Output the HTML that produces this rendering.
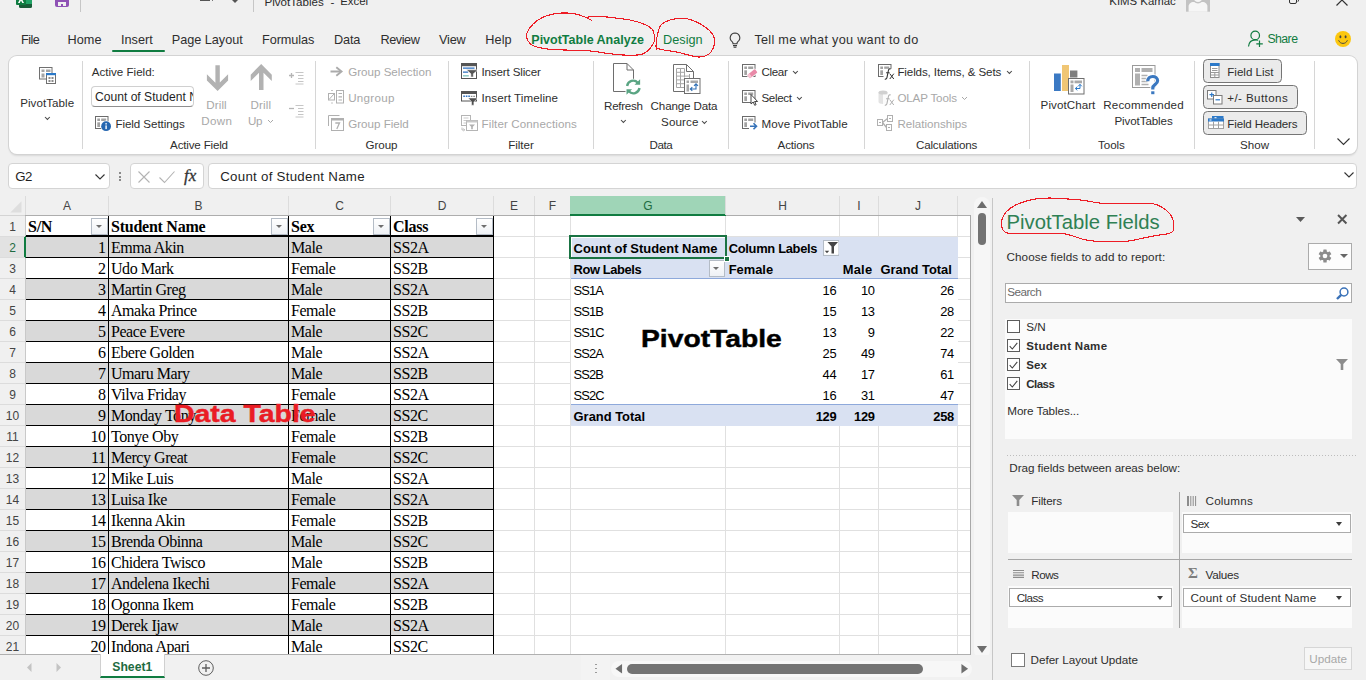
<!DOCTYPE html>
<html><head><meta charset="utf-8"><title>PivotTables - Excel</title>
<style>
*{box-sizing:border-box;margin:0;padding:0}
html,body{width:1366px;height:680px;overflow:hidden;background:#f0f0f0;font-family:"Liberation Sans",sans-serif}
body{font-family:"Liberation Sans",sans-serif;font-size:12.6px;color:#2e2e2e;position:relative}
.a{position:absolute}
.t{position:absolute;white-space:nowrap;line-height:1}
.c{transform:translateX(-50%)}
.dis{color:#a6a6a6}
.sep{position:absolute;width:1px;background:#d6d6d6;top:61px;height:88px}
svg{position:absolute;overflow:visible}
/* tabs */
.tab{position:absolute;top:32.5px;font-size:12.7px;white-space:nowrap;line-height:1;color:#242424}
/* ribbon */
#ribbon{position:absolute;left:9px;top:56px;width:1348px;height:98px;background:#fff;border-radius:8px;box-shadow:0 0 0 1px #d3d3d3,0 1.500px 2px rgba(0,0,0,.10)}
.rt{position:absolute;white-space:nowrap;line-height:1;font-size:12.3px}
.gl{position:absolute;white-space:nowrap;line-height:1;font-size:12px;top:139px;transform:translateX(-50%);color:#242424}
.sbtn{position:absolute;border:1px solid #757575;border-radius:4.500px;background:#ebebeb}
/* formula bar */
.fbox{position:absolute;top:163px;height:26px;background:#fff;border:1px solid #d4d4d4;border-radius:4px}
/* sheet */
#sheet{position:absolute;left:0;top:196px;width:970px;height:461px;background:#fff;overflow:hidden}
.ch{position:absolute;top:0;height:19px;background:#f0f0f0;font-size:12.5px;color:#444;text-align:center;line-height:20px}
.rh{position:absolute;left:0;width:24px;height:21px;background:#f0f0f0;font-size:12.5px;color:#444;text-align:right;padding-right:4px;line-height:22px}
.vl{position:absolute;width:1px;background:#e1e1e1}
.hl{position:absolute;height:1px;background:#e1e1e1}
.dc{position:absolute;height:21px;font-family:"Liberation Serif",serif;font-size:16px;line-height:21px;color:#000;white-space:nowrap;padding:0 2px;letter-spacing:-.45px}
.pv{position:absolute;height:21px;font-size:13px;line-height:23.500px;color:#000;white-space:nowrap;letter-spacing:0}
.fb{position:absolute;width:16.500px;height:16.500px;background:linear-gradient(#fff,#eef1f5);border:1px solid #b4bcc6}
.fb:after{content:"";position:absolute;left:3.800px;top:5.800px;border:3.700px solid transparent;border-top:3.800px solid #6e6e6e;border-bottom:0}
/* pane */
#pane{position:absolute;left:992px;top:198px;width:374px;height:482px;background:#f0f0f0;border-left:1px solid #c6c6c6}
.pt{position:absolute;white-space:nowrap;line-height:1;font-size:12.3px;color:#262626}
.wb{position:absolute;background:#fbfbfb}
.cb{position:absolute;width:12px;height:12px;background:#fff;border:1px solid #5c5c5c}
.dd{position:absolute;height:19px;background:#fff;border:1px solid #ababab;font-size:12px;line-height:17px;padding-left:6px;color:#262626;white-space:nowrap}
.dd:after{content:"";position:absolute;right:8.500px;top:6.500px;border:3.800px solid transparent;border-top:4.200px solid #3c3c3c;border-bottom:0}

</style></head>
<body>
<!-- titlebar -->
<div id="titlebar">
  <div class="a" style="left:19px;top:0;width:13px;height:8px;background:#185c37;border-radius:0 0 1.500px 1.500px"></div>
  <div class="a" style="left:26px;top:0;width:6px;height:4px;background:#21a366"></div>
  <div class="a" style="left:16px;top:0;width:10px;height:5px;background:#107c41;border-radius:0 0 1px 1px"></div>
  <svg style="left:18px;top:0" width="6" height="3" viewBox="0 0 6 3"><path d="M0 3L2 -1h2L6 3H4.300L3 .6 1.700 3z" fill="#fff"/></svg>
  <div class="a" style="left:55px;top:0;width:14px;height:7px;background:#8f52b5;border-radius:0 0 2px 2px"></div>
  <div class="a" style="left:58px;top:2.400px;width:8px;height:3.400px;background:#f0f0f0"></div>
  <div class="a" style="left:61px;top:3.900px;width:2px;height:2px;background:#8f52b5"></div>
  <div class="a" style="left:80px;top:0;width:1px;height:12px;background:#c6c6c6"></div>
  <div class="a" style="left:200px;top:0;width:10px;height:1px;background:#555"></div><div class="a" style="left:212px;top:0;width:1px;height:1px;background:#777"></div>
  <svg style="left:231.500px;top:0" width="6" height="3" viewBox="0 0 6 3"><path d="M0 0h6L3 3z" fill="#555"/></svg>
  <div class="a" style="left:253px;top:0;width:1px;height:12px;background:#c6c6c6"></div>
  <div class="t" style="left:264.500px;top:-3.900px;font-size:11.600px;color:#2b2b2b">PivotTables</div><div class="t" style="left:330.500px;top:-3.900px;font-size:11.600px;color:#2b2b2b">-</div><div class="t" style="left:340.200px;top:-3.900px;font-size:11.400px;color:#2b2b2b">Excel</div>
  <div class="t" style="left:1109.300px;top:-3.700px;font-size:11.400px;color:#2b2b2b">KIMS Kamac</div>
  <svg style="left:1186px;top:0" width="24" height="12" viewBox="0 0 24 12"><rect width="24" height="11.700" fill="#c3c3c3"/><path d="M2.600 11.700V6.500c0-2.800 2.200-4.600 5-4.600h8.800c2.800 0 5 1.800 5 4.600v5.200z" fill="#f6f6f6"/><circle cx="12" cy="-2.200" r="5.600" fill="#c3c3c3"/><circle cx="12" cy="-2.200" r="4.300" fill="#f6f6f6"/></svg>
  <div class="a" style="left:1289px;top:-6px;width:8px;height:10px;border:1.200px solid #333;border-radius:2px"></div>
  <div class="a" style="left:1296px;top:-6px;width:3px;height:8px;border-right:1.200px solid #333;border-radius:0 0 2px 0"></div>
  <svg style="left:1336px;top:0" width="12" height="8"><path d="M0.500 -5.500 L11.500 5.500 M11.500 -5.500 L0.500 5.500" stroke="#333" stroke-width="1.200" fill="none"/></svg>
</div>

<!-- tabs -->
<div id="tabs">
  <div class="t" style="left:21.0px;top:33.9px;font-size:12.70px;letter-spacing:-0.55px;">File</div>
  <div class="t" style="left:67.5px;top:33.9px;font-size:12.70px;letter-spacing:0.04px;">Home</div>
  <div class="t" style="left:120.9px;top:33.9px;font-size:12.70px;letter-spacing:0.05px;">Insert</div>
  <div class="a" style="left:112px;top:50px;width:53px;height:2px;background:#107c41;border-radius:1px"></div>
  <div class="t" style="left:171.8px;top:33.9px;font-size:12.70px;letter-spacing:-0.03px;">Page Layout</div>
  <div class="t" style="left:262.0px;top:33.9px;font-size:12.70px;letter-spacing:-0.08px;">Formulas</div>
  <div class="t" style="left:334.0px;top:33.9px;font-size:12.70px;letter-spacing:-0.14px;">Data</div>
  <div class="t" style="left:380.5px;top:33.9px;font-size:12.70px;letter-spacing:-0.45px;">Review</div>
  <div class="t" style="left:439.0px;top:33.9px;font-size:12.70px;letter-spacing:-0.20px;">View</div>
  <div class="t" style="left:485.3px;top:33.9px;font-size:12.70px;letter-spacing:0.06px;">Help</div>
  <div class="t" style="left:531.3px;top:34.0px;font-size:12.50px;font-weight:700;color:#107c41">PivotTable Analyze</div>
  <div class="t" style="left:663.0px;top:33.9px;font-size:12.70px;letter-spacing:0.03px;color:#107c41">Design</div>
  <svg style="left:727px;top:31px" width="16" height="18" viewBox="0 0 16 18"><path d="M8 2a4.800 4.800 0 0 0-2.900 8.600c.6.5.9 1.100.9 1.800v.3h4v-.3c0-.7.3-1.300.9-1.800A4.800 4.800 0 0 0 8 2z M6 14.600h4 M6.600 16.300h2.800" fill="none" stroke="#3b3b3b" stroke-width="1.100"/></svg>
  <div class="t" style="left:754.4px;top:33.9px;font-size:12.70px;letter-spacing:0.28px;">Tell me what you want to do</div>
  <svg style="left:1247px;top:30px" width="17" height="18" viewBox="0 0 17 18"><circle cx="8.200" cy="5.400" r="4.300" fill="none" stroke="#107c41" stroke-width="1.200"/><path d="M1.500 16.500c.4-4.500 3-6.700 7-6.700 1 0 1.900.15 2.700.5" fill="none" stroke="#107c41" stroke-width="1.200"/><path d="M12.500 10.500v6.500M9.300 13.800h6.500" stroke="#107c41" stroke-width="1.200"/></svg>
  <div class="t" style="left:1267.400px;top:33.100px;font-size:12.300px;letter-spacing:-.55px;color:#107c41">Share</div>
  <svg style="left:1335px;top:30.800px" width="16" height="16" viewBox="0 0 16 16"><circle cx="8" cy="8" r="8" fill="#fcc70f"/><ellipse cx="5.400" cy="5.700" rx=".95" ry="1.500" fill="#454545"/><ellipse cx="10.600" cy="5.700" rx=".95" ry="1.500" fill="#454545"/><path d="M3.600 9.300c1 2.200 2.600 3.100 4.400 3.100s3.400-.9 4.400-3.100" fill="none" stroke="#454545" stroke-width="1"/></svg>
</div>

<!-- ribbon -->
<div id="ribbon"></div>
<!-- PivotTable -->
<svg style="left:39px;top:66.500px" width="17" height="17" viewBox="0 0 17 17"><rect x=".5" y=".5" width="12.500" height="11.500" fill="#fff" stroke="#707070"/><rect x="2.500" y="2.500" width="3" height="2.500" fill="#a5a5a5"/><rect x="7" y="2.500" width="4.500" height="2.500" fill="#a5a5a5"/><rect x="2.500" y="6.500" width="3" height="4" fill="#a5a5a5"/><rect x="7.500" y="6.500" width="9" height="10" fill="#fff" stroke="#707070"/><rect x="7" y="6" width="10" height="2.200" fill="#2b79c9"/><rect x="9.500" y="10" width="2" height="2" fill="#8a8a8a"/><rect x="12.500" y="10" width="2" height="2" fill="#8a8a8a"/><rect x="9.500" y="13" width="2" height="2" fill="#8a8a8a"/><rect x="12.500" y="13" width="2" height="2" fill="#8a8a8a"/></svg>
<div class="t" style="left:20.2px;top:97.3px;font-size:11.60px;letter-spacing:0.05px;">PivotTable</div>
<svg style="left:44.500px;top:116.500px" width="5" height="3"><g><path d="M0 0l2.400 2.400L4.800 0" fill="none" stroke="#484848" stroke-width="1.050"/></g></svg>
<div class="sep" style="left:82px"></div>
<!-- Active Field -->
<div class="t" style="left:91.7px;top:65.7px;font-size:11.60px;">Active Field:</div>
<div class="a" style="left:91px;top:86px;width:103px;height:21px;background:#fff;border:1px solid #d0d0d0;border-bottom-color:#8f8f8f;border-radius:4px;overflow:hidden"><div class="t" style="left:3px;top:4.200px;font-size:12.100px;color:#1f1f1f">Count of Student Name</div></div>
<svg style="left:95px;top:115.500px" width="17" height="16" viewBox="0 0 17 16"><g><rect x=".5" y=".5" width="12.500" height="12" fill="#fff" stroke="#6b6b6b"/><rect x="2.300" y="2.500" width="2.700" height="2.500" fill="#a2a2a2"/><rect x="6.200" y="2.500" width="5" height="2.500" fill="#a2a2a2"/><rect x="2.300" y="6.300" width="2.700" height="4.700" fill="#a2a2a2"/></g><circle cx="11.100" cy="10.200" r="5.600" fill="#fff"/><circle cx="11.100" cy="10.200" r="4.900" fill="#2566b0"/><rect x="10.400" y="9.400" width="1.400" height="3.700" fill="#fff"/><rect x="10.400" y="7.100" width="1.400" height="1.400" fill="#fff"/></svg>
<div class="t" style="left:115.5px;top:117.6px;font-size:11.60px;letter-spacing:-0.08px;">Field Settings</div>
<svg style="left:0;top:0" width="300" height="100"><path d="M215.400 65.200H219.800V82.600L228.100 74.300V80.600L217.600 91.100L206.900 80.600V74.300L215.400 82.800Z" fill="#b2b2b2"/><path d="M261.200 64.100L271.800 74.700V81L263.500 72.700V90H259V72.700L250.700 81V74.700Z" fill="#b2b2b2"/></svg>
<div class="t" style="left:206.3px;top:98.7px;font-size:11.60px;letter-spacing:0.11px;color:#a8a8a8">Drill</div>
<div class="t" style="left:201.3px;top:114.6px;font-size:11.60px;letter-spacing:0.35px;color:#a8a8a8">Down</div>

<div class="t" style="left:250.6px;top:98.7px;font-size:11.60px;letter-spacing:0.11px;color:#a8a8a8">Drill</div>
<div class="t" style="left:248.0px;top:114.6px;font-size:11.60px;letter-spacing:-0.33px;color:#a8a8a8">Up</div>
<svg style="left:267.500px;top:119.500px" width="5" height="3"><g><path d="M0 0l2.500 2.500L5 0" fill="none" stroke="#a8a8a8" stroke-width="1"/></g></svg>
<svg style="left:288.500px;top:71px" width="15" height="14" viewBox="0 0 15 14"><path d="M0 4.500h5M2.500 2v5" stroke="#b5b5b5" stroke-width="1.300"/><path d="M6.500 1.500h8M9 4.500h5.500M9 7.500h5.500M9 10.500h5.500M6.500 13h8" stroke="#c6c6c6" stroke-width="1"/></svg>
<svg style="left:288.500px;top:103.500px" width="15" height="14" viewBox="0 0 15 14"><path d="M0 4.500h5" stroke="#b5b5b5" stroke-width="1.300"/><path d="M6.500 1.500h8M9 4.500h5.500M9 7.500h5.500M9 10.500h5.500M6.500 13h8" stroke="#c6c6c6" stroke-width="1"/></svg>
<div class="t c" style="left:199.0px;top:139.3px;font-size:11.60px;letter-spacing:-0.18px;">Active Field</div>
<div class="sep" style="left:315px"></div>
<!-- Group -->
<svg style="left:329.500px;top:65.500px" width="13" height="11" viewBox="0 0 13 11"><path d="M.5 5.500h9.500" fill="none" stroke="#ababab" stroke-width="2"/><path d="M6.300 1.300l5.200 4.200-5.200 4.200" fill="none" stroke="#ababab" stroke-width="1.900"/></svg>
<div class="t" style="left:348.2px;top:65.7px;font-size:11.60px;color:#a8a8a8">Group Selection</div>
<svg style="left:328px;top:90px" width="16" height="14" viewBox="0 0 16 14"><path d="M3 .5h3.500M3 13h3.500" stroke="#c4c4c4" stroke-dasharray="2 1.500"/><rect x=".5" y="3.500" width="6" height="6.500" fill="none" stroke="#b0b0b0"/><path d="M1 9.500l5-5.500" stroke="#b0b0b0"/><rect x="8.500" y=".5" width="7" height="12.500" fill="none" stroke="#b0b0b0"/><path d="M10.500 3.500h3.500M10.500 6.800h3.500M10.500 10h3.500" stroke="#b0b0b0" stroke-width="1.200"/></svg>
<div class="t" style="left:348.2px;top:91.8px;font-size:11.60px;letter-spacing:0.30px;color:#a8a8a8">Ungroup</div>
<svg style="left:328px;top:115px" width="16" height="16" viewBox="0 0 16 16"><path d="M.5 11V.5h11" fill="none" stroke="#b0b0b0"/><rect x="3.500" y="3.500" width="12" height="12" fill="#fff" stroke="#b0b0b0"/><rect x="3.500" y="3.500" width="12" height="2" fill="#b0b0b0"/><path d="M7.300 8h4.200l-2.700 6" fill="none" stroke="#b0b0b0" stroke-width="1.300"/></svg>
<div class="t" style="left:348.2px;top:117.6px;font-size:11.60px;color:#a8a8a8">Group Field</div>
<div class="t c" style="left:381.5px;top:139.3px;font-size:11.60px;letter-spacing:-0.06px;">Group</div>
<div class="sep" style="left:448px"></div>
<!-- Filter -->
<svg style="left:461px;top:63px" width="16" height="16" viewBox="0 0 16 16"><rect x=".5" y=".5" width="15" height="15" fill="#fff" stroke="#555"/><rect x="0" y="0" width="16" height="3.200" fill="#555"/><path d="M2 5.100h11.500M2 9.100h5.200" stroke="#2b6fc0" stroke-width="1.400"/><path d="M2 12.800h5.800" stroke="#8fcac5" stroke-width="1.500"/><path d="M5.500 6.800h10.500v1l-3.700 3v3.200h-2.400v-3.200z" fill="#555" stroke="#fff" stroke-width=".5"/></svg>
<div class="t" style="left:481.5px;top:65.7px;font-size:11.60px;letter-spacing:-0.15px;">Insert Slicer</div>
<svg style="left:461px;top:91px" width="16" height="15" viewBox="0 0 16 15"><rect x=".5" y=".5" width="15" height="9.500" fill="#fff" stroke="#555"/><rect x="0" y="0" width="16" height="3" fill="#555"/><path d="M2.300 5.300h1.600M4.800 5.300h1.600M7.300 5.300h1.600" stroke="#2b6fc0" stroke-width="1.500"/><path d="M9.800 5.300h1.600M12.300 5.300h1.600" stroke="#8a8a8a" stroke-width="1.200"/><path d="M7.300 7h8.700v1l-3.100 2.800v3.400h-2.400v-3.400z" fill="#4e4e4e" stroke="#fff" stroke-width=".5"/></svg>
<div class="t" style="left:481.5px;top:91.8px;font-size:11.60px;letter-spacing:0.08px;">Insert Timeline</div>
<svg style="left:460.500px;top:115px" width="17" height="16" viewBox="0 0 17 16"><rect x=".5" y=".5" width="9" height="10" fill="#fff" stroke="#b5b5b5"/><path d="M2.500 3h5M2.500 5.500h5M2.500 8h3" stroke="#c9c9c9"/><rect x="5.500" y="5.500" width="11" height="10" fill="#fff" stroke="#b5b5b5"/><rect x="5.500" y="5.500" width="11" height="2" fill="#c9c9c9"/><path d="M8 9.500h6l-2.200 2.300v2.400h-1.600v-2.400z" fill="#b0b0b0"/><path d="M1 12.500v2.500h2.500M2.500 13.500l1.200 1.500-1.200 1" fill="none" stroke="#b5b5b5" stroke-width=".9"/></svg>
<div class="t" style="left:481.5px;top:117.6px;font-size:11.60px;letter-spacing:0.11px;color:#a8a8a8">Filter Connections</div>
<div class="t c" style="left:521.0px;top:139.3px;font-size:11.60px;letter-spacing:-0.06px;">Filter</div>
<div class="sep" style="left:593px"></div>
<!-- Data -->
<svg style="left:612.500px;top:62.800px" width="31" height="32" viewBox="0 0 31 32"><path d="M.5.500h13.500l6.500 6.500v11.500M12.500 28.500H.5V.5M14 .5v6.500h6.500" fill="none" stroke="#6e6e6e" stroke-width="1"/><g transform="translate(-1.700,0)"><circle cx="22" cy="24" r="8.200" fill="#fff"/><path d="M15.800 23a6.200 6.200 0 0 1 10.700-3.300" fill="none" stroke="#5aa583" stroke-width="2.400"/><path d="M28.800 16.200v5.600h-5.600z" fill="#5aa583"/><path d="M28.200 25a6.200 6.200 0 0 1-10.700 3.300" fill="none" stroke="#5aa583" stroke-width="2.400"/><path d="M15.200 31.800v-5.600h5.600z" fill="#5aa583"/></g></svg>
<div class="t c" style="left:623.4px;top:100.1px;font-size:11.60px;letter-spacing:-0.27px;">Refresh</div>
<svg style="left:621px;top:120px" width="5" height="3"><g><path d="M0 0l2.400 2.400L4.800 0" fill="none" stroke="#484848" stroke-width="1.050"/></g></svg>
<svg style="left:673px;top:64px" width="28" height="30" viewBox="0 0 28 30"><path d="M.5.500h13l7 7v7M11 27.500H.5V.5M13.500.5v7h7" fill="none" stroke="#6e6e6e"/><path d="M3.500 4.500h8M3.500 8.300h8M3.500 12.100h13.500M3.500 15.900h8M3.500 19.700h8M3.500 23.500h8M3.500 4.500v19M7.500 4.500v19M11.500 4.500v9M16.500 10v4" stroke="#a6a6a6" fill="none"/><rect x="11.500" y="14.500" width="15.500" height="15" fill="#fff" stroke="#6e6e6e"/><rect x="13.500" y="16.500" width="2.500" height="2.500" fill="#a8a8a8"/><rect x="17.500" y="16.500" width="7.500" height="2.500" fill="#a8a8a8"/><rect x="13.500" y="20.500" width="2.500" height="7" fill="#a8a8a8"/><path d="M23 19.800v5.200h-5.500M21 21.800l2-2.100 2 2.100M19.300 23.200l-2 1.800 2 1.800" fill="none" stroke="#2f6fb5" stroke-width="1.100"/></svg>
<div class="t c" style="left:684.0px;top:100.1px;font-size:11.60px;letter-spacing:-0.14px;">Change Data</div>
<div class="t" style="left:661.0px;top:116.3px;font-size:11.60px;letter-spacing:0.15px;">Source</div>
<svg style="left:702px;top:120.500px" width="5" height="3"><g><path d="M0 0l2.400 2.400L4.800 0" fill="none" stroke="#484848" stroke-width="1.050"/></g></svg>
<div class="t c" style="left:661.0px;top:139.3px;font-size:11.60px;letter-spacing:-0.43px;">Data</div>
<div class="sep" style="left:728px"></div>
<!-- Actions -->
<svg style="left:741.500px;top:63.500px" width="16" height="16" viewBox="0 0 16 16"><g><rect x=".5" y=".5" width="12.500" height="12" fill="#fff" stroke="#6b6b6b"/><rect x="2.300" y="2.500" width="2.700" height="2.500" fill="#a2a2a2"/><rect x="6.200" y="2.500" width="5" height="2.500" fill="#a2a2a2"/><rect x="2.300" y="6.300" width="2.700" height="4.700" fill="#a2a2a2"/></g><g transform="rotate(-38 10.300 9.800)"><rect x="4.800" y="7" width="11" height="5.600" rx="1.200" fill="#fff"/><rect x="5.500" y="7.600" width="9.800" height="4.400" rx="1" fill="#e98aa8"/><rect x="5.500" y="7.600" width="2.600" height="4.400" rx="1" fill="#f6c3d2"/></g></svg>
<div class="t" style="left:761.5px;top:65.7px;font-size:11.60px;letter-spacing:-0.36px;">Clear</div>
<svg style="left:792.500px;top:70.500px" width="5" height="3"><g><path d="M0 0l2.400 2.400L4.800 0" fill="none" stroke="#484848" stroke-width="1.050"/></g></svg>
<svg style="left:741.500px;top:89.500px" width="16" height="16" viewBox="0 0 16 16"><g><rect x=".5" y=".5" width="12.500" height="12" fill="#fff" stroke="#6b6b6b"/><rect x="2.300" y="2.500" width="2.700" height="2.500" fill="#a2a2a2"/><rect x="6.200" y="2.500" width="5" height="2.500" fill="#a2a2a2"/><rect x="2.300" y="6.300" width="2.700" height="4.700" fill="#a2a2a2"/></g><path d="M9 4.500v9.500l2.200-2 1.500 3.300 1.400-.6-1.500-3.200h3z" fill="#fff" stroke="#333" stroke-width=".9"/></svg>
<div class="t" style="left:761.5px;top:91.8px;font-size:11.60px;letter-spacing:-0.37px;">Select</div>
<svg style="left:796.500px;top:96.500px" width="5" height="3"><g><path d="M0 0l2.400 2.400L4.800 0" fill="none" stroke="#484848" stroke-width="1.050"/></g></svg>
<svg style="left:741.500px;top:116px" width="16" height="16" viewBox="0 0 16 16"><g><rect x=".5" y=".5" width="12.500" height="12" fill="#fff" stroke="#6b6b6b"/><rect x="2.300" y="2.500" width="2.700" height="2.500" fill="#a2a2a2"/><rect x="6.200" y="2.500" width="5" height="2.500" fill="#a2a2a2"/><rect x="2.300" y="6.300" width="2.700" height="4.700" fill="#a2a2a2"/></g><rect x="7" y="6.500" width="9" height="8" fill="#fff"/><path d="M8 10.300h6M11.500 7.300l3 3-3 3" fill="none" stroke="#3572b8" stroke-width="1.600"/></svg>
<div class="t" style="left:761.5px;top:117.6px;font-size:11.60px;letter-spacing:0.08px;">Move PivotTable</div>
<div class="t c" style="left:796.0px;top:139.3px;font-size:11.60px;letter-spacing:-0.17px;">Actions</div>
<div class="sep" style="left:864px"></div>
<!-- Calculations -->
<svg style="left:877.500px;top:63.500px" width="17" height="16" viewBox="0 0 17 16"><g><rect x=".5" y=".5" width="12.500" height="12" fill="#fff" stroke="#6b6b6b"/><rect x="2.300" y="2.500" width="2.700" height="2.500" fill="#a2a2a2"/><rect x="6.200" y="2.500" width="5" height="2.500" fill="#a2a2a2"/><rect x="2.300" y="6.300" width="2.700" height="4.700" fill="#a2a2a2"/></g><rect x="5.500" y="4.800" width="12" height="11" fill="#fff"/><g transform="translate(5.800,3.500)" stroke="#333"><g><path d="M1 11.500c1.200.5 1.900-.2 2.200-1.600L4.600 3c.3-1.500 1.100-2.100 2.300-1.600M2.300 5.300h3.500" fill="none" stroke-width="1.100"/><path d="M6 6.200l4 5.300M10 6.200l-4 5.300" fill="none" stroke-width="1"/></g></g></svg>
<div class="t" style="left:897.4px;top:65.7px;font-size:11.60px;letter-spacing:-0.12px;">Fields, Items, &amp; Sets</div>
<svg style="left:1006.500px;top:70.500px" width="5" height="3"><g><path d="M0 0l2.400 2.400L4.800 0" fill="none" stroke="#484848" stroke-width="1.050"/></g></svg>
<svg style="left:877.500px;top:89.500px" width="17" height="16" viewBox="0 0 17 16"><path d="M.5 2.500v9.500c0 1.100 2 2 4.500 2s4.500-.9 4.500-2V2.500" fill="#e3e3e3"/><ellipse cx="5" cy="2.500" rx="4.500" ry="2" fill="#d0d0d0"/><rect x="5" y="4.500" width="12" height="11.500" fill="#fff" opacity=".85"/><g transform="translate(5.800,3.500)" stroke="#b0b0b0"><g><path d="M1 11.500c1.200.5 1.900-.2 2.200-1.600L4.600 3c.3-1.500 1.100-2.100 2.300-1.600M2.300 5.300h3.500" fill="none" stroke-width="1.100"/><path d="M6 6.200l4 5.300M10 6.200l-4 5.300" fill="none" stroke-width="1"/></g></g></svg>
<div class="t" style="left:897.4px;top:91.8px;font-size:11.60px;letter-spacing:-0.14px;color:#a8a8a8">OLAP Tools</div>
<svg style="left:961.500px;top:96.500px" width="5" height="3"><g><path d="M0 0l2.500 2.500L5 0" fill="none" stroke="#a8a8a8" stroke-width="1"/></g></svg>
<svg style="left:877px;top:115px" width="17" height="16" viewBox="0 0 17 16"><path d="M5.500 7.500L10.500 3.500M5.500 7.500L9.500 12.500" stroke="#b0b0b0" stroke-width="1.300" fill="none"/><rect x=".5" y="4.500" width="5" height="6" fill="#fff" stroke="#b0b0b0"/><rect x="10.500" y=".5" width="5" height="6" fill="#fff" stroke="#b0b0b0"/><rect x="9.500" y="9.500" width="5" height="6" fill="#fff" stroke="#b0b0b0"/><path d="M2 7.500h2M12 3.500h2M11 12.500h2" stroke="#b0b0b0"/></svg>
<div class="t" style="left:897.4px;top:117.6px;font-size:11.60px;color:#a8a8a8">Relationships</div>
<div class="t c" style="left:946.6px;top:139.3px;font-size:11.60px;letter-spacing:-0.15px;">Calculations</div>
<div class="sep" style="left:1029px"></div>
<!-- Tools -->
<svg style="left:1054px;top:64.500px" width="31" height="30" viewBox="0 0 31 30"><rect x="0" y="8.500" width="6.800" height="17.500" fill="#3b79c3"/><rect x="8" y="0" width="7" height="26" fill="#f0c674"/><rect x="16" y="5.500" width="7.400" height="7" fill="#7f7f7f"/><rect x="14.500" y="13.500" width="15.500" height="15.500" fill="#fff" stroke="#6e6e6e"/><rect x="16.500" y="15.500" width="3" height="2.800" fill="#a8a8a8"/><rect x="20.500" y="15.500" width="7.500" height="2.800" fill="#a8a8a8"/><rect x="16.500" y="19.500" width="3" height="7.500" fill="#a8a8a8"/><path d="M26 19.500v4h-4.500M24.200 21.300l1.800-2 1.800 2M23.300 21.700l-2 1.800 2 1.800" fill="none" stroke="#2b79c9" stroke-width="1"/></svg>
<div class="t c" style="left:1068.0px;top:99.0px;font-size:11.60px;letter-spacing:0.07px;">PivotChart</div>
<svg style="left:1132px;top:64.500px" width="29" height="30" viewBox="0 0 29 30"><rect x=".5" y=".5" width="22.500" height="22" fill="#fff" stroke="#9a9a9a"/><rect x="3" y="3" width="5" height="4" fill="#b0b0b0"/><rect x="9.500" y="3" width="11" height="4" fill="#b0b0b0"/><rect x="3" y="8.500" width="5" height="12" fill="#b0b0b0"/><path d="M9.500 10.500h6M9.500 13.500h5M9.500 16.500h6M9.500 19.500h7" stroke="#b0b0b0" stroke-width="1.500"/><path d="M15.800 16.300c0-3 2.100-4.800 4.900-4.800s4.900 1.600 4.900 4.200c0 2-1.200 2.900-2.600 3.900-1.400 1-2.200 1.800-2.200 3.600v1.200" fill="none" stroke="#fff" stroke-width="5.200"/><path d="M15.800 16.300c0-3 2.100-4.800 4.900-4.800s4.900 1.600 4.900 4.200c0 2-1.200 2.900-2.600 3.900-1.400 1-2.200 1.800-2.200 3.600v1.200" fill="none" stroke="#3b78c0" stroke-width="3.200"/><rect x="18.600" y="25.700" width="4.300" height="4" fill="#fff"/><rect x="19.200" y="26.300" width="3.200" height="2.900" fill="#3b78c0"/></svg>
<div class="t c" style="left:1143.5px;top:98.5px;font-size:11.60px;letter-spacing:0.18px;">Recommended</div>
<div class="t c" style="left:1143.5px;top:114.6px;font-size:11.60px;letter-spacing:-0.10px;">PivotTables</div>
<div class="t c" style="left:1111.4px;top:139.3px;font-size:11.60px;letter-spacing:-0.10px;">Tools</div>
<div class="sep" style="left:1194px"></div>
<!-- Show -->
<div class="sbtn" style="left:1203px;top:59px;width:79px;height:23.500px"></div>
<svg style="left:1209.500px;top:63px" width="10" height="15" viewBox="0 0 10 15"><rect x=".5" y=".5" width="8.500" height="14" fill="#fff" stroke="#8c8c8c"/><rect x="0" y="0" width="9.500" height="3" fill="#2b79c9"/><path d="M2 5.500h5.500M2 7.500h5.500" stroke="#9a9a9a" stroke-width="1"/><path d="M.5 9.500h8.500M.5 12h8.500M4.800 9.500v5" stroke="#9a9a9a" stroke-width="1"/></svg>
<div class="t" style="left:1227.3px;top:65.7px;font-size:11.60px;letter-spacing:-0.02px;">Field List</div>
<div class="sbtn" style="left:1203px;top:85px;width:94.500px;height:23.500px"></div>
<svg style="left:1207px;top:89.500px" width="16" height="15" viewBox="0 0 16 15"><rect x=".5" y=".5" width="8.500" height="8.500" fill="#fff" stroke="#7a7a7a"/><path d="M2.500 4.700h4.500M4.750 2.500v4.500" stroke="#2b79c9" stroke-width="1.200"/><rect x="6.500" y="5.500" width="8.500" height="8.500" fill="#fff" stroke="#7a7a7a"/><path d="M8.500 9.800h4.500" stroke="#2b79c9" stroke-width="1.200"/></svg>
<div class="t" style="left:1227.3px;top:91.8px;font-size:11.60px;letter-spacing:0.40px;">+/- Buttons</div>
<div class="sbtn" style="left:1203px;top:111px;width:104px;height:23.500px"></div>
<svg style="left:1207.500px;top:115.800px" width="16" height="13" viewBox="0 0 16 13"><rect x="4" y="0" width="11.500" height="3.500" fill="#2b79c9"/><rect x=".5" y="3" width="15" height="9.500" fill="#fff" stroke="#a0a0a0"/><rect x="0" y="2.500" width="16" height="3" fill="#2b79c9"/><path d="M.5 9h15M5.500 5.500v7M10.500 5.500v7" stroke="#a0a0a0" stroke-width="1"/><path d="M6.500 1.700h2M1.500 4h2" stroke="#fff" stroke-width="1"/></svg>
<div class="t" style="left:1227.3px;top:117.6px;font-size:11.60px;letter-spacing:-0.16px;">Field Headers</div>
<div class="t c" style="left:1254.5px;top:139.3px;font-size:11.60px;letter-spacing:0.06px;">Show</div>
<div class="sep" style="left:1314px"></div>
<svg style="left:1337.200px;top:137.800px" width="13" height="7" viewBox="0 0 13 7"><path d="M.5.5l6 6 6-6" fill="none" stroke="#333" stroke-width="1.100"/></svg>

<!-- formulabar -->
<div class="fbox" style="left:8px;width:102px"></div>
<div class="t" style="left:15.2px;top:170.3px;font-size:13.30px;letter-spacing:-0.55px;color:#1f1f1f">G2</div>
<svg style="left:94.500px;top:173.500px" width="10" height="6" viewBox="0 0 10 6"><path d="M.5.500l4.500 4.500L9.500.5" fill="none" stroke="#333" stroke-width="1.100"/></svg>
<div class="a" style="left:119px;top:172px;width:2px;height:2px;background:#8a8a8a"></div>
<div class="a" style="left:119px;top:175.500px;width:2px;height:2px;background:#8a8a8a"></div>
<div class="a" style="left:119px;top:179px;width:2px;height:2px;background:#8a8a8a"></div>
<div class="fbox" style="left:130px;width:73.500px"></div>
<svg style="left:138px;top:170.500px" width="12" height="12" viewBox="0 0 12 12"><path d="M.5.500l11 11M11.500.5l-11 11" stroke="#b3b3b3" stroke-width="1.100" fill="none"/></svg>
<svg style="left:159px;top:170.500px" width="16" height="12" viewBox="0 0 16 12"><path d="M.5 6.500l5 5L15.500.5" stroke="#b3b3b3" stroke-width="1.100" fill="none"/></svg>
<div class="t" style="left:184px;top:167px;font-family:'Liberation Serif',serif;font-style:italic;font-size:17px;color:#333;-webkit-text-stroke:.3px #333">fx</div>
<div class="fbox" style="left:208px;width:1149px"></div>
<div class="t" style="left:220.2px;top:170.1px;font-size:13.30px;letter-spacing:0.27px;color:#1f1f1f">Count of Student Name</div>
<svg style="left:1343.500px;top:171.500px" width="10" height="6" viewBox="0 0 10 6"><path d="M.5.500l4.500 4.500L9.500.5" fill="none" stroke="#333" stroke-width="1.100"/></svg>

<!-- sheet -->
<div id="sheet">
<div class="a" style="left:0;top:0;width:971px;height:19px;background:#f0f0f0"></div>
<div class="a" style="left:0;top:19px;width:25px;height:1px;background:#d4d4d4"></div>
<div class="a" style="left:25px;top:19px;width:946px;height:1px;background:#adadad"></div>
<svg style="left:10px;top:4.500px" width="12" height="12" viewBox="0 0 12 12"><path d="M11.500 .3V11.500H.3z" fill="#dedede"/></svg>
<div class="t c" style="left:67.0px;top:3.5px;font-size:12px;color:#444">A</div>
<div class="a" style="left:108px;top:0;width:1px;height:19px;background:#dcdcdc"></div>
<div class="t c" style="left:198.5px;top:3.5px;font-size:12px;color:#444">B</div>
<div class="a" style="left:288px;top:0;width:1px;height:19px;background:#dcdcdc"></div>
<div class="t c" style="left:339.5px;top:3.5px;font-size:12px;color:#444">C</div>
<div class="a" style="left:390px;top:0;width:1px;height:19px;background:#dcdcdc"></div>
<div class="t c" style="left:442.0px;top:3.5px;font-size:12px;color:#444">D</div>
<div class="a" style="left:493px;top:0;width:1px;height:19px;background:#dcdcdc"></div>
<div class="t c" style="left:514.0px;top:3.5px;font-size:12px;color:#444">E</div>
<div class="a" style="left:534px;top:0;width:1px;height:19px;background:#dcdcdc"></div>
<div class="t c" style="left:552.5px;top:3.5px;font-size:12px;color:#444">F</div>
<div class="a" style="left:570px;top:0;width:1px;height:19px;background:#dcdcdc"></div>
<div class="a" style="left:570px;top:0;width:156px;height:20px;background:#9fd5b7;border-bottom:2px solid #107c41"></div>
<div class="t c" style="left:648.0px;top:3.5px;font-size:12px;color:#1e6b41">G</div>
<div class="a" style="left:725px;top:0;width:1px;height:19px;background:#dcdcdc"></div>
<div class="t c" style="left:782.5px;top:3.5px;font-size:12px;color:#444">H</div>
<div class="a" style="left:839px;top:0;width:1px;height:19px;background:#dcdcdc"></div>
<div class="t c" style="left:859.0px;top:3.5px;font-size:12px;color:#444">I</div>
<div class="a" style="left:878px;top:0;width:1px;height:19px;background:#dcdcdc"></div>
<div class="t c" style="left:918.0px;top:3.5px;font-size:12px;color:#444">J</div>
<div class="a" style="left:957px;top:0;width:1px;height:19px;background:#dcdcdc"></div>
<div class="a" style="left:25px;top:0;width:1px;height:19px;background:#dcdcdc"></div>
<div class="a" style="left:0;top:20px;width:25px;height:440px;background:#f0f0f0"></div>
<div class="a" style="left:25px;top:20px;width:1px;height:440px;background:#c9c9c9"></div>
<div class="a" style="left:0;top:41px;width:24px;height:20px;background:#e2e2e2"></div>
<div class="a" style="left:24px;top:40px;width:2px;height:22px;background:#107c41"></div>
<div class="t c" style="left:12.500px;top:24.9px;font-size:12px;color:#444">1</div>
<div class="a" style="left:0;top:40px;width:25px;height:1px;background:#dcdcdc"></div>
<div class="t c" style="left:12.500px;top:45.9px;font-size:12px;color:#1e6b41">2</div>
<div class="a" style="left:0;top:61px;width:25px;height:1px;background:#dcdcdc"></div>
<div class="t c" style="left:12.500px;top:66.9px;font-size:12px;color:#444">3</div>
<div class="a" style="left:0;top:82px;width:25px;height:1px;background:#dcdcdc"></div>
<div class="t c" style="left:12.500px;top:87.9px;font-size:12px;color:#444">4</div>
<div class="a" style="left:0;top:103px;width:25px;height:1px;background:#dcdcdc"></div>
<div class="t c" style="left:12.500px;top:108.9px;font-size:12px;color:#444">5</div>
<div class="a" style="left:0;top:124px;width:25px;height:1px;background:#dcdcdc"></div>
<div class="t c" style="left:12.500px;top:129.9px;font-size:12px;color:#444">6</div>
<div class="a" style="left:0;top:145px;width:25px;height:1px;background:#dcdcdc"></div>
<div class="t c" style="left:12.500px;top:150.9px;font-size:12px;color:#444">7</div>
<div class="a" style="left:0;top:166px;width:25px;height:1px;background:#dcdcdc"></div>
<div class="t c" style="left:12.500px;top:171.9px;font-size:12px;color:#444">8</div>
<div class="a" style="left:0;top:187px;width:25px;height:1px;background:#dcdcdc"></div>
<div class="t c" style="left:12.500px;top:192.9px;font-size:12px;color:#444">9</div>
<div class="a" style="left:0;top:208px;width:25px;height:1px;background:#dcdcdc"></div>
<div class="t c" style="left:12.500px;top:213.9px;font-size:12px;color:#444">10</div>
<div class="a" style="left:0;top:229px;width:25px;height:1px;background:#dcdcdc"></div>
<div class="t c" style="left:12.500px;top:234.9px;font-size:12px;color:#444">11</div>
<div class="a" style="left:0;top:250px;width:25px;height:1px;background:#dcdcdc"></div>
<div class="t c" style="left:12.500px;top:255.9px;font-size:12px;color:#444">12</div>
<div class="a" style="left:0;top:271px;width:25px;height:1px;background:#dcdcdc"></div>
<div class="t c" style="left:12.500px;top:276.9px;font-size:12px;color:#444">13</div>
<div class="a" style="left:0;top:292px;width:25px;height:1px;background:#dcdcdc"></div>
<div class="t c" style="left:12.500px;top:297.9px;font-size:12px;color:#444">14</div>
<div class="a" style="left:0;top:313px;width:25px;height:1px;background:#dcdcdc"></div>
<div class="t c" style="left:12.500px;top:318.9px;font-size:12px;color:#444">15</div>
<div class="a" style="left:0;top:334px;width:25px;height:1px;background:#dcdcdc"></div>
<div class="t c" style="left:12.500px;top:339.9px;font-size:12px;color:#444">16</div>
<div class="a" style="left:0;top:355px;width:25px;height:1px;background:#dcdcdc"></div>
<div class="t c" style="left:12.500px;top:360.9px;font-size:12px;color:#444">17</div>
<div class="a" style="left:0;top:376px;width:25px;height:1px;background:#dcdcdc"></div>
<div class="t c" style="left:12.500px;top:381.9px;font-size:12px;color:#444">18</div>
<div class="a" style="left:0;top:397px;width:25px;height:1px;background:#dcdcdc"></div>
<div class="t c" style="left:12.500px;top:402.9px;font-size:12px;color:#444">19</div>
<div class="a" style="left:0;top:418px;width:25px;height:1px;background:#dcdcdc"></div>
<div class="t c" style="left:12.500px;top:423.9px;font-size:12px;color:#444">20</div>
<div class="a" style="left:0;top:439px;width:25px;height:1px;background:#dcdcdc"></div>
<div class="t c" style="left:12.500px;top:444.9px;font-size:12px;color:#444">21</div>
<div class="a" style="left:0;top:460px;width:25px;height:1px;background:#dcdcdc"></div>
<div class="hl" style="left:26px;top:40px;width:945px;background:#e0e0e0"></div>
<div class="hl" style="left:26px;top:61px;width:945px;background:#e0e0e0"></div>
<div class="hl" style="left:26px;top:82px;width:945px;background:#e0e0e0"></div>
<div class="hl" style="left:26px;top:103px;width:945px;background:#e0e0e0"></div>
<div class="hl" style="left:26px;top:124px;width:945px;background:#e0e0e0"></div>
<div class="hl" style="left:26px;top:145px;width:945px;background:#e0e0e0"></div>
<div class="hl" style="left:26px;top:166px;width:945px;background:#e0e0e0"></div>
<div class="hl" style="left:26px;top:187px;width:945px;background:#e0e0e0"></div>
<div class="hl" style="left:26px;top:208px;width:945px;background:#e0e0e0"></div>
<div class="hl" style="left:26px;top:229px;width:945px;background:#e0e0e0"></div>
<div class="hl" style="left:26px;top:250px;width:945px;background:#e0e0e0"></div>
<div class="hl" style="left:26px;top:271px;width:945px;background:#e0e0e0"></div>
<div class="hl" style="left:26px;top:292px;width:945px;background:#e0e0e0"></div>
<div class="hl" style="left:26px;top:313px;width:945px;background:#e0e0e0"></div>
<div class="hl" style="left:26px;top:334px;width:945px;background:#e0e0e0"></div>
<div class="hl" style="left:26px;top:355px;width:945px;background:#e0e0e0"></div>
<div class="hl" style="left:26px;top:376px;width:945px;background:#e0e0e0"></div>
<div class="hl" style="left:26px;top:397px;width:945px;background:#e0e0e0"></div>
<div class="hl" style="left:26px;top:418px;width:945px;background:#e0e0e0"></div>
<div class="hl" style="left:26px;top:439px;width:945px;background:#e0e0e0"></div>
<div class="hl" style="left:26px;top:460px;width:945px;background:#e0e0e0"></div>
<div class="vl" style="left:108px;top:20px;height:440px;background:#e0e0e0"></div>
<div class="vl" style="left:288px;top:20px;height:440px;background:#e0e0e0"></div>
<div class="vl" style="left:390px;top:20px;height:440px;background:#e0e0e0"></div>
<div class="vl" style="left:493px;top:20px;height:440px;background:#e0e0e0"></div>
<div class="vl" style="left:534px;top:20px;height:440px;background:#e0e0e0"></div>
<div class="vl" style="left:570px;top:20px;height:440px;background:#e0e0e0"></div>
<div class="vl" style="left:725px;top:20px;height:440px;background:#e0e0e0"></div>
<div class="vl" style="left:839px;top:20px;height:440px;background:#e0e0e0"></div>
<div class="vl" style="left:878px;top:20px;height:440px;background:#e0e0e0"></div>
<div class="vl" style="left:957px;top:20px;height:440px;background:#e0e0e0"></div>
<div class="a" style="left:26px;top:41px;width:467px;height:21px;background:#d9d9d9"></div>
<div class="a" style="left:26px;top:83px;width:467px;height:21px;background:#d9d9d9"></div>
<div class="a" style="left:26px;top:125px;width:467px;height:21px;background:#d9d9d9"></div>
<div class="a" style="left:26px;top:167px;width:467px;height:21px;background:#d9d9d9"></div>
<div class="a" style="left:26px;top:209px;width:467px;height:21px;background:#d9d9d9"></div>
<div class="a" style="left:26px;top:251px;width:467px;height:21px;background:#d9d9d9"></div>
<div class="a" style="left:26px;top:293px;width:467px;height:21px;background:#d9d9d9"></div>
<div class="a" style="left:26px;top:335px;width:467px;height:21px;background:#d9d9d9"></div>
<div class="a" style="left:26px;top:377px;width:467px;height:21px;background:#d9d9d9"></div>
<div class="a" style="left:26px;top:419px;width:467px;height:21px;background:#d9d9d9"></div>
<div class="dc" style="left:26px;top:20px;font-weight:700;letter-spacing:-.25px">S/N</div>
<div class="fb" style="left:91px;top:22px"></div>
<div class="dc" style="left:109px;top:20px;font-weight:700;letter-spacing:-.25px">Student Name</div>
<div class="fb" style="left:271px;top:22px"></div>
<div class="dc" style="left:289px;top:20px;font-weight:700;letter-spacing:-.25px">Sex</div>
<div class="fb" style="left:373px;top:22px"></div>
<div class="dc" style="left:391px;top:20px;font-weight:700;letter-spacing:-.25px">Class</div>
<div class="fb" style="left:476px;top:22px"></div>
<div class="dc" style="left:26px;top:41px;width:82px;text-align:right;padding-right:2.500px">1</div>
<div class="dc" style="left:109px;top:41px">Emma Akin</div>
<div class="dc" style="left:289px;top:41px">Male</div>
<div class="dc" style="left:391px;top:41px">SS2A</div>
<div class="dc" style="left:26px;top:62px;width:82px;text-align:right;padding-right:2.500px">2</div>
<div class="dc" style="left:109px;top:62px">Udo Mark</div>
<div class="dc" style="left:289px;top:62px">Female</div>
<div class="dc" style="left:391px;top:62px">SS2B</div>
<div class="dc" style="left:26px;top:83px;width:82px;text-align:right;padding-right:2.500px">3</div>
<div class="dc" style="left:109px;top:83px">Martin Greg</div>
<div class="dc" style="left:289px;top:83px">Male</div>
<div class="dc" style="left:391px;top:83px">SS2A</div>
<div class="dc" style="left:26px;top:104px;width:82px;text-align:right;padding-right:2.500px">4</div>
<div class="dc" style="left:109px;top:104px">Amaka Prince</div>
<div class="dc" style="left:289px;top:104px">Female</div>
<div class="dc" style="left:391px;top:104px">SS2B</div>
<div class="dc" style="left:26px;top:125px;width:82px;text-align:right;padding-right:2.500px">5</div>
<div class="dc" style="left:109px;top:125px">Peace Evere</div>
<div class="dc" style="left:289px;top:125px">Male</div>
<div class="dc" style="left:391px;top:125px">SS2C</div>
<div class="dc" style="left:26px;top:146px;width:82px;text-align:right;padding-right:2.500px">6</div>
<div class="dc" style="left:109px;top:146px">Ebere Golden</div>
<div class="dc" style="left:289px;top:146px">Male</div>
<div class="dc" style="left:391px;top:146px">SS2A</div>
<div class="dc" style="left:26px;top:167px;width:82px;text-align:right;padding-right:2.500px">7</div>
<div class="dc" style="left:109px;top:167px">Umaru Mary</div>
<div class="dc" style="left:289px;top:167px">Male</div>
<div class="dc" style="left:391px;top:167px">SS2B</div>
<div class="dc" style="left:26px;top:188px;width:82px;text-align:right;padding-right:2.500px">8</div>
<div class="dc" style="left:109px;top:188px">Vilva Friday</div>
<div class="dc" style="left:289px;top:188px">Female</div>
<div class="dc" style="left:391px;top:188px">SS2A</div>
<div class="dc" style="left:26px;top:209px;width:82px;text-align:right;padding-right:2.500px">9</div>
<div class="dc" style="left:109px;top:209px">Monday Tony</div>
<div class="dc" style="left:289px;top:209px">Female</div>
<div class="dc" style="left:391px;top:209px">SS2C</div>
<div class="dc" style="left:26px;top:230px;width:82px;text-align:right;padding-right:2.500px">10</div>
<div class="dc" style="left:109px;top:230px">Tonye Oby</div>
<div class="dc" style="left:289px;top:230px">Female</div>
<div class="dc" style="left:391px;top:230px">SS2B</div>
<div class="dc" style="left:26px;top:251px;width:82px;text-align:right;padding-right:2.500px">11</div>
<div class="dc" style="left:109px;top:251px">Mercy Great</div>
<div class="dc" style="left:289px;top:251px">Female</div>
<div class="dc" style="left:391px;top:251px">SS2C</div>
<div class="dc" style="left:26px;top:272px;width:82px;text-align:right;padding-right:2.500px">12</div>
<div class="dc" style="left:109px;top:272px">Mike Luis</div>
<div class="dc" style="left:289px;top:272px">Male</div>
<div class="dc" style="left:391px;top:272px">SS2A</div>
<div class="dc" style="left:26px;top:293px;width:82px;text-align:right;padding-right:2.500px">13</div>
<div class="dc" style="left:109px;top:293px">Luisa Ike</div>
<div class="dc" style="left:289px;top:293px">Female</div>
<div class="dc" style="left:391px;top:293px">SS2A</div>
<div class="dc" style="left:26px;top:314px;width:82px;text-align:right;padding-right:2.500px">14</div>
<div class="dc" style="left:109px;top:314px">Ikenna Akin</div>
<div class="dc" style="left:289px;top:314px">Female</div>
<div class="dc" style="left:391px;top:314px">SS2B</div>
<div class="dc" style="left:26px;top:335px;width:82px;text-align:right;padding-right:2.500px">15</div>
<div class="dc" style="left:109px;top:335px">Brenda Obinna</div>
<div class="dc" style="left:289px;top:335px">Male</div>
<div class="dc" style="left:391px;top:335px">SS2C</div>
<div class="dc" style="left:26px;top:356px;width:82px;text-align:right;padding-right:2.500px">16</div>
<div class="dc" style="left:109px;top:356px">Chidera Twisco</div>
<div class="dc" style="left:289px;top:356px">Male</div>
<div class="dc" style="left:391px;top:356px">SS2B</div>
<div class="dc" style="left:26px;top:377px;width:82px;text-align:right;padding-right:2.500px">17</div>
<div class="dc" style="left:109px;top:377px">Andelena Ikechi</div>
<div class="dc" style="left:289px;top:377px">Female</div>
<div class="dc" style="left:391px;top:377px">SS2A</div>
<div class="dc" style="left:26px;top:398px;width:82px;text-align:right;padding-right:2.500px">18</div>
<div class="dc" style="left:109px;top:398px">Ogonna Ikem</div>
<div class="dc" style="left:289px;top:398px">Female</div>
<div class="dc" style="left:391px;top:398px">SS2B</div>
<div class="dc" style="left:26px;top:419px;width:82px;text-align:right;padding-right:2.500px">19</div>
<div class="dc" style="left:109px;top:419px">Derek Ijaw</div>
<div class="dc" style="left:289px;top:419px">Male</div>
<div class="dc" style="left:391px;top:419px">SS2A</div>
<div class="dc" style="left:26px;top:440px;width:82px;text-align:right;padding-right:2.500px">20</div>
<div class="dc" style="left:109px;top:440px">Indona Apari</div>
<div class="dc" style="left:289px;top:440px">Male</div>
<div class="dc" style="left:391px;top:440px">SS2C</div>
<div class="a" style="left:26px;top:39px;width:468px;height:2px;background:#000"></div>
<div class="a" style="left:26px;top:61px;width:468px;height:1px;background:#000"></div>
<div class="a" style="left:26px;top:82px;width:468px;height:1px;background:#000"></div>
<div class="a" style="left:26px;top:103px;width:468px;height:1px;background:#000"></div>
<div class="a" style="left:26px;top:124px;width:468px;height:1px;background:#000"></div>
<div class="a" style="left:26px;top:145px;width:468px;height:1px;background:#000"></div>
<div class="a" style="left:26px;top:166px;width:468px;height:1px;background:#000"></div>
<div class="a" style="left:26px;top:187px;width:468px;height:1px;background:#000"></div>
<div class="a" style="left:26px;top:208px;width:468px;height:1px;background:#000"></div>
<div class="a" style="left:26px;top:229px;width:468px;height:1px;background:#000"></div>
<div class="a" style="left:26px;top:250px;width:468px;height:1px;background:#000"></div>
<div class="a" style="left:26px;top:271px;width:468px;height:1px;background:#000"></div>
<div class="a" style="left:26px;top:292px;width:468px;height:1px;background:#000"></div>
<div class="a" style="left:26px;top:313px;width:468px;height:1px;background:#000"></div>
<div class="a" style="left:26px;top:334px;width:468px;height:1px;background:#000"></div>
<div class="a" style="left:26px;top:355px;width:468px;height:1px;background:#000"></div>
<div class="a" style="left:26px;top:376px;width:468px;height:1px;background:#000"></div>
<div class="a" style="left:26px;top:397px;width:468px;height:1px;background:#000"></div>
<div class="a" style="left:26px;top:418px;width:468px;height:1px;background:#000"></div>
<div class="a" style="left:26px;top:439px;width:468px;height:1px;background:#000"></div>
<div class="a" style="left:26px;top:460px;width:468px;height:1px;background:#000"></div>
<div class="a" style="left:108px;top:20px;width:1px;height:445px;background:#000"></div>
<div class="a" style="left:288px;top:20px;width:1px;height:445px;background:#000"></div>
<div class="a" style="left:390px;top:20px;width:1px;height:445px;background:#000"></div>
<div class="a" style="left:493px;top:20px;width:1px;height:445px;background:#000"></div>
<div class="a" style="left:571px;top:41px;width:387px;height:189px;background:#fff"></div>
<div class="a" style="left:571px;top:41px;width:387px;height:41px;background:#d9e1f2"></div>
<div class="a" style="left:571px;top:82px;width:387px;height:1px;background:#8ea9db"></div>
<div class="a" style="left:571px;top:209px;width:387px;height:21px;background:#d9e1f2"></div>
<div class="a" style="left:571px;top:208px;width:387px;height:1px;background:#8ea9db"></div>
<div class="pv" style="left:573.6px;top:41px;font-weight:700;font-size:12.95px">Count of Student Name</div>
<div class="pv" style="left:728.7px;top:41px;font-weight:700;letter-spacing:-0.3px;font-size:12.9px">Column Labels</div>
<div class="pv" style="left:573.6px;top:62px;font-weight:700;letter-spacing:-0.4px;font-size:12.9px">Row Labels</div>
<div class="pv" style="left:728.7px;top:62px;font-weight:700;font-size:12.9px">Female</div>
<div class="pv" style="right:97.70000000000005px;top:62px;font-weight:700;letter-spacing:0.25px;font-size:12.9px">Male</div>
<div class="pv" style="right:18.200000000000045px;top:62px;font-weight:700;font-size:12.9px">Grand Total</div>
<div class="pv" style="left:573.6px;top:83px;letter-spacing:-0.9px;font-size:12.9px">SS1A</div>
<div class="pv" style="right:133.70000000000005px;top:83px;letter-spacing:-0.3px;font-size:12.9px">16</div>
<div class="pv" style="right:95.29999999999995px;top:83px;letter-spacing:-0.3px;font-size:12.9px">10</div>
<div class="pv" style="right:16.100000000000023px;top:83px;letter-spacing:-0.3px;font-size:12.9px">26</div>
<div class="pv" style="left:573.6px;top:104px;letter-spacing:-0.9px;font-size:12.9px">SS1B</div>
<div class="pv" style="right:133.70000000000005px;top:104px;letter-spacing:-0.3px;font-size:12.9px">15</div>
<div class="pv" style="right:95.29999999999995px;top:104px;letter-spacing:-0.3px;font-size:12.9px">13</div>
<div class="pv" style="right:16.100000000000023px;top:104px;letter-spacing:-0.3px;font-size:12.9px">28</div>
<div class="pv" style="left:573.6px;top:125px;letter-spacing:-0.9px;font-size:12.9px">SS1C</div>
<div class="pv" style="right:133.70000000000005px;top:125px;letter-spacing:-0.3px;font-size:12.9px">13</div>
<div class="pv" style="right:95.29999999999995px;top:125px;letter-spacing:-0.3px;font-size:12.9px">9</div>
<div class="pv" style="right:16.100000000000023px;top:125px;letter-spacing:-0.3px;font-size:12.9px">22</div>
<div class="pv" style="left:573.6px;top:146px;letter-spacing:-0.9px;font-size:12.9px">SS2A</div>
<div class="pv" style="right:133.70000000000005px;top:146px;letter-spacing:-0.3px;font-size:12.9px">25</div>
<div class="pv" style="right:95.29999999999995px;top:146px;letter-spacing:-0.3px;font-size:12.9px">49</div>
<div class="pv" style="right:16.100000000000023px;top:146px;letter-spacing:-0.3px;font-size:12.9px">74</div>
<div class="pv" style="left:573.6px;top:167px;letter-spacing:-0.9px;font-size:12.9px">SS2B</div>
<div class="pv" style="right:133.70000000000005px;top:167px;letter-spacing:-0.3px;font-size:12.9px">44</div>
<div class="pv" style="right:95.29999999999995px;top:167px;letter-spacing:-0.3px;font-size:12.9px">17</div>
<div class="pv" style="right:16.100000000000023px;top:167px;letter-spacing:-0.3px;font-size:12.9px">61</div>
<div class="pv" style="left:573.6px;top:188px;letter-spacing:-0.9px;font-size:12.9px">SS2C</div>
<div class="pv" style="right:133.70000000000005px;top:188px;letter-spacing:-0.3px;font-size:12.9px">16</div>
<div class="pv" style="right:95.29999999999995px;top:188px;letter-spacing:-0.3px;font-size:12.9px">31</div>
<div class="pv" style="right:16.100000000000023px;top:188px;letter-spacing:-0.3px;font-size:12.9px">47</div>
<div class="pv" style="left:573.6px;top:209px;font-weight:700;font-size:12.9px">Grand Total</div>
<div class="pv" style="right:133.70000000000005px;top:209px;font-weight:700;letter-spacing:-0.3px;font-size:12.9px">129</div>
<div class="pv" style="right:95.29999999999995px;top:209px;font-weight:700;letter-spacing:-0.3px;font-size:12.9px">129</div>
<div class="pv" style="right:16.100000000000023px;top:209px;font-weight:700;letter-spacing:-0.3px;font-size:12.9px">258</div>
<div class="fb" style="left:822.500px;top:43.5px;width:16.500px;height:16px"></div>
<svg style="left:823.500px;top:44.5px" width="15" height="14" viewBox="0 0 15 14"><rect x=".5" y=".5" width="14" height="13" fill="#fff"/><path d="M3.500 1h10.500l-4 4.500v7h-2.500v-7z" fill="#454545"/><path d="M.8 9.800h4.400l-2.200 2.500z" fill="#454545"/></svg>
<div class="fb" style="left:708.500px;top:64px;width:16.500px;height:17px"></div>
<div class="a" style="left:569px;top:39px;width:158px;height:23.500px;border:2px solid #1a7343;box-shadow:inset 1px 1px 0 #fff"></div>
<div class="a" style="left:723.500px;top:59.5px;width:6px;height:6px;background:#1a7343;border:1px solid #fff"></div>
</div>
<div class="a" style="left:0;top:654px;width:971px;height:1px;background:#b0b0b0"></div>
<div class="a" style="left:970px;top:215px;width:1px;height:440px;background:#a8a8a8"></div>
<div class="a" style="left:971px;top:196px;width:21px;height:459px;background:#f0f0f0"></div>
<div class="a" style="left:973.500px;top:196.500px;width:16.500px;height:462px;background:#f6f6f6;border-radius:8px"></div>
<svg style="left:977px;top:201px" width="10" height="7" viewBox="0 0 10 7"><path d="M5 0l5 7H0z" fill="#6e6e6e"/></svg>
<div class="a" style="left:977.500px;top:213px;width:8.500px;height:32px;background:#737373;border-radius:4.500px"></div>
<svg style="left:977px;top:645.500px" width="10" height="7" viewBox="0 0 10 7"><path d="M5 7l5-7H0z" fill="#6e6e6e"/></svg>
<div class="a" style="left:0;top:655px;width:993px;height:25px;background:#f1f1f1"></div>
<svg style="left:26.500px;top:663px" width="5" height="9" viewBox="0 0 5 9"><path d="M4.500 0v9L0 4.500z" fill="#c3c3c3"/></svg>
<svg style="left:56px;top:663px" width="5" height="9" viewBox="0 0 5 9"><path d="M.5 0v9L5 4.500z" fill="#c3c3c3"/></svg>
<div class="a" style="left:100px;top:654px;width:65px;height:24px;background:#fff;border-left:1px solid #d0d0d0;border-right:1px solid #d0d0d0;border-bottom:2px solid #107c41"></div>
<div class="t" style="left:112.3px;top:661.2px;font-size:12.20px;font-weight:700;color:#1e6b41">Sheet1</div>
<svg style="left:198px;top:659.500px" width="16" height="16" viewBox="0 0 16 16"><circle cx="8" cy="8" r="7.300" fill="none" stroke="#5e5e5e" stroke-width="1"/><path d="M4 8h8M8 4v8" stroke="#5e5e5e" stroke-width="1.300"/></svg>
<div class="a" style="left:581px;top:655px;width:29px;height:25px;background:#f3f3f3"></div>
<div class="a" style="left:595px;top:663.5px;width:1.500px;height:1.500px;background:#9a9a9a"></div>
<div class="a" style="left:595px;top:667.5px;width:1.500px;height:1.500px;background:#9a9a9a"></div>
<div class="a" style="left:595px;top:671.5px;width:1.500px;height:1.500px;background:#9a9a9a"></div>
<div class="a" style="left:610.500px;top:661px;width:361px;height:15.500px;background:#f7f7f7;border-radius:8px"></div>
<svg style="left:614.500px;top:664px" width="7.500" height="9.500" viewBox="0 0 7 10"><path d="M7 0v10L0 5z" fill="#6e6e6e"/></svg>
<div class="a" style="left:627px;top:664px;width:296px;height:9.500px;background:#737373;border-radius:5px"></div>
<svg style="left:961px;top:664px" width="7.500" height="9.500" viewBox="0 0 7 10"><path d="M0 0v10l7-5z" fill="#6e6e6e"/></svg>

<!-- pane -->
<div id="pane"></div>
<div class="t" style="left:1006.5px;top:212.3px;font-size:20.28px;color:#2f8054">PivotTable Fields</div>
<svg style="left:1295.800px;top:217.200px" width="9" height="5" viewBox="0 0 9 5"><path d="M0 0h9L4.500 5z" fill="#5a5a5a"/></svg>
<svg style="left:1337px;top:214px" width="10.500" height="10.500" viewBox="0 0 10 10"><path d="M1 1l8 8M9 1L1 9" stroke="#555" stroke-width="1.900" fill="none"/></svg>
<div class="t" style="left:1006.5px;top:251.3px;font-size:11.70px;letter-spacing:0.07px;">Choose fields to add to report:</div>
<div class="a" style="left:1308px;top:243px;width:44px;height:27px;background:#fdfdfd;border:1px solid #ababab"></div>
<svg style="left:1317.600px;top:248.700px" width="14" height="14" viewBox="0 0 14 14"><g fill="#8c8c8c"><circle cx="7" cy="7" r="4.700"/><rect x="5.300" y=".6" width="3.400" height="12.800" rx=".5"/><rect x="5.300" y=".6" width="3.400" height="12.800" rx=".5" transform="rotate(60 7 7)"/><rect x="5.300" y=".6" width="3.400" height="12.800" rx=".5" transform="rotate(120 7 7)"/></g><circle cx="7" cy="7" r="2.300" fill="#fdfdfd"/></svg>
<svg style="left:1339.500px;top:254px" width="8" height="4" viewBox="0 0 8 4"><path d="M0 0h8L4 4z" fill="#666"/></svg>
<div class="a" style="left:1005px;top:283px;width:347px;height:20px;background:#fff;border:1px solid #ababab"></div>
<div class="t" style="left:1007.3px;top:286.3px;font-size:11.70px;letter-spacing:-0.53px;color:#6a6a6a">Search</div>
<svg style="left:1336px;top:286.500px" width="13" height="13" viewBox="0 0 13 13"><circle cx="8" cy="5" r="3.900" fill="none" stroke="#3a72b8" stroke-width="1.500"/><path d="M5.200 7.800L1 12" stroke="#3a72b8" stroke-width="2.400"/></svg>
<div class="wb" style="left:1005px;top:319px;width:347px;height:120px"></div>
<div class="cb" style="left:1007px;top:320px;width:13px;height:13px"></div>
<div class="cb" style="left:1007px;top:339px;width:13px;height:13px"></div>
<div class="cb" style="left:1007px;top:358px;width:13px;height:13px"></div>
<div class="cb" style="left:1007px;top:377px;width:13px;height:13px"></div>
<svg style="left:1009px;top:341.500px" width="9" height="8" viewBox="0 0 9 8"><path d="M.7 4.200l2.600 2.800L8.300.8" fill="none" stroke="#444" stroke-width="1.100"/></svg>
<svg style="left:1009px;top:360.500px" width="9" height="8" viewBox="0 0 9 8"><path d="M.7 4.200l2.600 2.800L8.300.8" fill="none" stroke="#444" stroke-width="1.100"/></svg>
<svg style="left:1009px;top:379.500px" width="9" height="8" viewBox="0 0 9 8"><path d="M.7 4.200l2.600 2.800L8.300.8" fill="none" stroke="#444" stroke-width="1.100"/></svg>
<div class="t" style="left:1026.3px;top:321.3px;font-size:11.70px;">S/N</div>
<div class="t" style="left:1026.3px;top:341.1px;font-size:11.50px;letter-spacing:0.31px;font-weight:700;">Student Name</div>
<div class="t" style="left:1026.3px;top:360.1px;font-size:11.50px;letter-spacing:0.07px;font-weight:700;">Sex</div>
<div class="t" style="left:1026.3px;top:379.1px;font-size:11.50px;letter-spacing:-0.55px;font-weight:700;">Class</div>
<svg style="left:1336.300px;top:359px" width="12" height="11" viewBox="0 0 12 11"><path d="M0 0h12L7.300 5v6H4.700V5z" fill="#8c8c8c"/></svg>
<div class="t" style="left:1007.3px;top:405.3px;font-size:11.70px;letter-spacing:-0.10px;">More Tables...</div>
<div class="a" style="left:1007px;top:455px;width:349px;height:1px;background:repeating-linear-gradient(90deg,#bdbdbd 0 1px,transparent 1px 3px)"></div>
<div class="t" style="left:1009.3px;top:462.1px;font-size:11.70px;letter-spacing:-0.06px;">Drag fields between areas below:</div>
<svg style="left:1011.500px;top:494.500px" width="12" height="11" viewBox="0 0 12 11"><path d="M0 0h12L7.300 5v6H4.700V5z" fill="#8c8c8c"/></svg>
<div class="t" style="left:1031.3px;top:495.2px;font-size:11.70px;letter-spacing:-0.18px;">Filters</div>
<div class="wb" style="left:1008px;top:512px;width:165px;height:41px"></div>
<div class="a" style="left:1179px;top:492px;width:1px;height:136px;background:#a6a6a6"></div>
<svg style="left:1187px;top:495.500px" width="10" height="10" viewBox="0 0 10 10"><path d="M1 0v10" stroke="#8c8c8c" stroke-width="2"/><path d="M3.800 0v10M6.200 0v10M8.600 0v10" stroke="#8c8c8c" stroke-width="1"/></svg>
<div class="t" style="left:1205.5px;top:495.2px;font-size:11.70px;letter-spacing:0.19px;">Columns</div>
<div class="wb" style="left:1182px;top:512px;width:170px;height:41px"></div>
<div class="dd" style="left:1183px;top:514px;width:168px"></div>
<div class="t" style="left:1190.4px;top:518.3px;font-size:11.70px;letter-spacing:-0.55px;">Sex</div>
<div class="a" style="left:1008px;top:559px;width:344px;height:1px;background:#a6a6a6"></div>
<svg style="left:1013px;top:569.500px" width="11" height="9" viewBox="0 0 11 9"><path d="M0 .5h11M0 2.800h11M0 5.100h11M0 7.400h11" stroke="#8c8c8c" stroke-width="1.100"/></svg>
<div class="t" style="left:1031.3px;top:568.9px;font-size:11.70px;letter-spacing:-0.55px;">Rows</div>
<div class="wb" style="left:1008px;top:586px;width:165px;height:42px"></div>
<div class="dd" style="left:1009px;top:588px;width:163px"></div>
<div class="t" style="left:1016.7px;top:592.3px;font-size:11.70px;letter-spacing:-0.55px;">Class</div>
<div class="t" style="left:1187.500px;top:566.500px;font-size:14px;color:#7c7c7c;font-family:'Liberation Serif',serif;font-weight:700;transform:scaleX(1.080);transform-origin:0 0">&Sigma;</div>
<div class="t" style="left:1205.5px;top:568.9px;font-size:11.70px;letter-spacing:-0.26px;">Values</div>
<div class="wb" style="left:1182px;top:586px;width:170px;height:42px"></div>
<div class="dd" style="left:1183px;top:588px;width:168px"></div>
<div class="t" style="left:1190.4px;top:592.3px;font-size:11.70px;letter-spacing:0.18px;">Count of Student Name</div>
<div class="cb" style="left:1011px;top:653px;width:13.500px;height:13.500px;border-color:#7a7a7a"></div>
<div class="t" style="left:1030.5px;top:654.1px;font-size:11.70px;letter-spacing:-0.02px;">Defer Layout Update</div>
<div class="a" style="left:1304px;top:647px;width:48px;height:23px;background:#f6f6f6;border:1px solid #d6d6d6"></div>
<div class="t" style="left:1309.3px;top:653.0px;font-size:11.70px;color:#a8a8a8">Update</div>

<!-- annot -->
<!-- hand-drawn red ellipses -->
<svg style="left:0;top:0" width="1366" height="680" viewBox="0 0 1366 680" fill="none" stroke="#ee1c25" stroke-width="1.100" stroke-linejoin="round" shape-rendering="crispEdges">
  <path d="M591.9 20.4C590.8 19.9 588.3 18.3 585.7 17.3C583.2 16.3 579.6 14.9 576.5 14.2C573.4 13.5 570.6 13.1 567.3 13.0C563.9 12.9 560.1 12.9 556.5 13.5C552.9 14.0 549.1 14.8 545.7 16.1C542.4 17.3 539.2 19.1 536.5 21.1C533.8 23.1 531.3 25.8 529.6 28.1C527.9 30.4 526.8 32.8 526.5 35.0C526.3 37.2 526.9 39.3 528.1 41.1C529.2 42.9 530.5 44.5 533.4 45.7C536.4 47.0 541.1 48.1 545.7 48.8C550.4 49.5 556.0 49.6 561.1 49.9C566.2 50.1 571.4 50.1 576.5 50.3C581.6 50.6 586.7 50.6 591.9 51.1C597.0 51.6 602.1 52.8 607.2 53.4C612.4 54.1 617.5 54.7 622.6 55.0C627.7 55.2 634.4 55.2 638.0 55.0C641.6 54.7 642.1 54.6 644.1 53.4C646.2 52.3 648.6 50.0 650.3 48.0C651.9 46.1 653.5 44.2 654.1 41.9C654.8 39.6 654.5 36.4 654.1 34.2C653.7 32.0 653.5 30.5 651.8 28.8C650.2 27.2 647.5 25.6 644.1 24.2C640.8 22.8 635.9 21.3 631.8 20.4C627.7 19.4 623.6 19.1 619.5 18.5C615.4 18.0 611.3 17.3 607.2 17.0C603.1 16.7 598.5 16.5 594.9 16.5C591.4 16.6 587.5 17.2 586.0 17.3"/>
  <path d="M656.4 49.6C656.1 48.7 655.9 46.3 656.1 43.4C656.4 40.6 657.1 35.7 658.0 32.7C658.8 29.6 659.2 27.0 661.0 25.0C662.8 22.9 665.9 21.4 668.7 20.4C671.5 19.3 674.9 18.8 678.0 18.5C681.0 18.3 684.1 18.3 687.2 18.8C690.2 19.4 693.3 20.5 696.4 21.9C699.5 23.3 702.9 25.2 705.6 27.3C708.3 29.3 711.1 32.0 712.5 34.2C714.0 36.4 714.4 38.1 714.5 40.4C714.7 42.7 714.3 45.7 713.3 48.0C712.3 50.3 711.0 52.7 708.7 54.2C706.4 55.7 702.5 56.8 699.5 57.0C696.4 57.2 693.8 56.2 690.2 55.4C686.7 54.7 682.1 53.2 678.0 52.3C673.9 51.5 669.0 50.9 665.7 50.3C662.3 49.8 659.5 48.9 658.0 48.8C656.4 48.7 656.7 50.5 656.4 49.6"/>
  <path d="M1064.7 198.8C1060.5 198.5 1057.3 198.1 1053.0 198.1C1048.6 198.0 1042.7 198.0 1038.3 198.5C1033.9 199.0 1030.5 199.8 1026.6 201.0C1022.7 202.1 1018.3 203.5 1014.9 205.4C1011.5 207.2 1008.3 209.6 1006.1 212.0C1004.0 214.3 1002.7 216.8 1002.0 219.3C1001.3 221.7 1001.3 224.5 1001.7 226.6C1002.2 228.7 1003.2 230.6 1004.6 231.7C1006.1 232.9 1006.8 233.3 1010.5 233.6C1014.2 233.9 1020.3 233.6 1026.6 233.6C1032.9 233.6 1042.5 233.6 1048.6 233.6C1054.7 233.6 1059.3 233.3 1063.2 233.6C1067.1 234.0 1068.6 234.7 1072.0 235.7C1075.4 236.7 1079.8 238.6 1083.7 239.5C1087.6 240.4 1091.0 240.9 1095.4 241.2C1099.8 241.6 1104.7 241.5 1110.1 241.5C1115.4 241.5 1122.3 241.8 1127.6 241.2C1133.0 240.7 1137.4 239.3 1142.3 238.3C1147.1 237.3 1152.5 236.2 1156.9 235.4C1161.3 234.6 1165.9 234.4 1168.6 233.6C1171.3 232.9 1172.2 232.7 1173.0 231.0C1173.9 229.3 1174.0 226.1 1173.7 223.7C1173.5 221.2 1172.9 218.7 1171.6 216.4C1170.2 214.0 1167.9 211.6 1165.7 209.8C1163.5 207.9 1160.8 206.4 1158.4 205.4C1155.9 204.3 1154.7 203.8 1151.1 203.5C1147.4 203.1 1141.8 203.2 1136.4 203.2C1131.0 203.1 1124.7 203.2 1118.8 203.2C1113.0 203.2 1106.2 203.5 1101.3 203.2C1096.4 202.9 1093.5 202.0 1089.6 201.4C1085.7 200.8 1082.0 200.1 1077.8 199.7C1073.7 199.2 1068.8 199.1 1064.7 198.8"/>
</svg>
<div class="t" style="left:174.300px;top:402.100px;font-size:23.900px;font-weight:700;color:#ea1c24;transform:scaleX(1.190);transform-origin:0 0;-webkit-text-stroke:.45px #ea1c24">Data Table</div>
<div class="t" style="left:641.200px;top:326.500px;font-size:23.900px;font-weight:700;color:#000;transform:scaleX(1.183);transform-origin:0 0;-webkit-text-stroke:.45px #000">PivotTable</div>

</body></html>
